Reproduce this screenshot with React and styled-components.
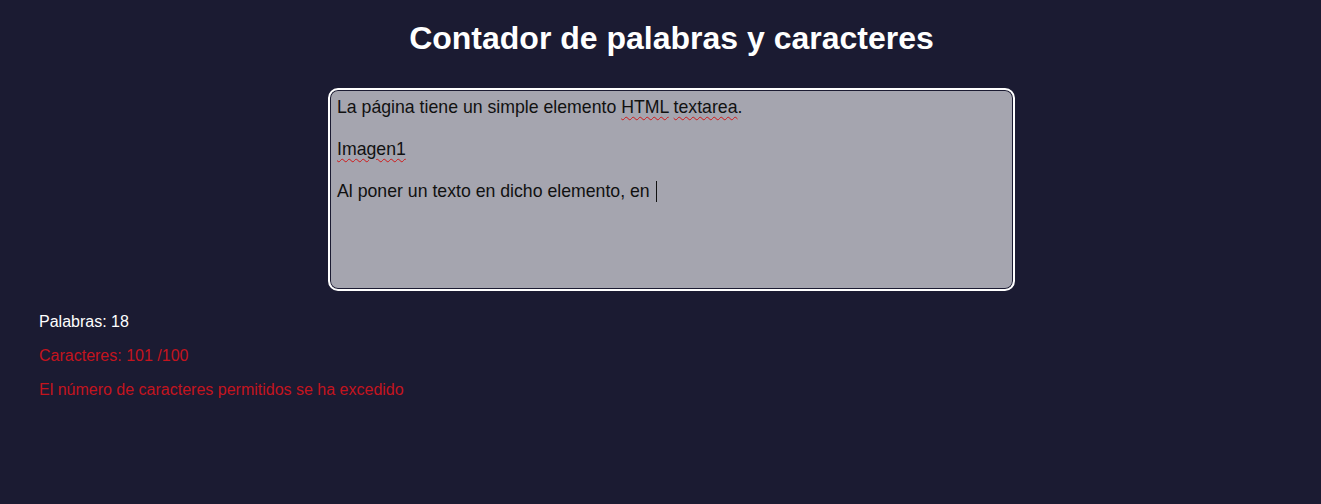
import React from 'react';
import styled, { createGlobalStyle } from 'styled-components';

const GlobalStyle = createGlobalStyle`
  html, body {
    margin: 0;
    background: #1b1b32;
    font-family: "Liberation Sans", Arial, sans-serif;
  }
`;

const Page = styled.main`
  min-height: 504px;
  box-sizing: border-box;
  padding: 20px 17px 0 39px;
  display: flex;
  flex-direction: column;
`;

const Title = styled.h1`
  margin: 0;
  align-self: center;
  color: #ffffff;
  font-size: 32px;
  font-weight: bold;
  line-height: 37px;
`;

const Editor = styled.div`
  align-self: center;
  margin-top: 31px;
  width: 687px;
  height: 203px;
  box-sizing: border-box;
  padding: 7px 7px 6px;
  background: #a5a5af;
  border: 2px solid #ffffff;
  border-radius: 10px;
  box-shadow: inset 0 0 0 1px #1b1b32;
  color: #111;
  font-size: 17.7px;
  line-height: 21px;
  white-space: pre-wrap;
`;

const Misspelled = styled.span`
  text-decoration: underline wavy #d01818;
  text-decoration-thickness: 1px;
  text-underline-offset: 3px;
`;

const Caret = styled.span`
  display: inline-block;
  width: 1px;
  height: 21px;
  margin-left: 1px;
  vertical-align: top;
  background: #111;
`;

const Stats = styled.div`
  margin-top: 22px;
  display: flex;
  flex-direction: column;
  gap: 16px;
`;

const Stat = styled.p`
  margin: 0;
  font-size: 16px;
  line-height: 18px;
  color: ${(p) => (p.$error ? '#c4141e' : '#ffffff')};
`;

export default function App() {
  return (
    <>
      <GlobalStyle />
      <Page>
        <Title>Contador de palabras y caracteres</Title>
        <Editor>
          La página tiene un simple elemento <Misspelled>HTML</Misspelled> <Misspelled>textarea</Misspelled>.{'\n\n'}
          <Misspelled>Imagen1</Misspelled>{'\n\n'}
          Al poner un texto en dicho elemento, en <Caret />
        </Editor>
        <Stats>
          <Stat>Palabras: 18</Stat>
          <Stat $error>Caracteres: 101 /100</Stat>
          <Stat $error>El número de caracteres permitidos se ha excedido</Stat>
        </Stats>
      </Page>
    </>
  );
}
